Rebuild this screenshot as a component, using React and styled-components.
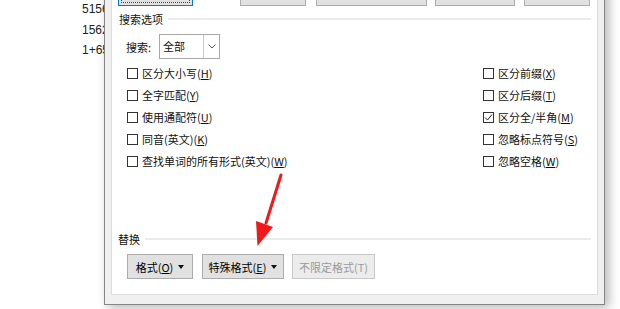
import React from 'react'
import styled, { createGlobalStyle } from 'styled-components'

const GlobalStyle = createGlobalStyle`
  html, body {
    margin: 0;
    padding: 0;
    background: #fff;
  }
  body {
    font-family: "Noto Sans CJK SC", "Noto Sans", sans-serif;
  }
`

const Page = styled.div`
  position: relative;
  display: flex;
  width: 620px;
  height: 309px;
  overflow: hidden;
  background: #fff;
`

const Sheet = styled.div`
  flex: none;
  width: 104px;
  box-sizing: border-box;
  padding-left: 82px;
  margin-top: -1px;
  overflow: hidden;
  white-space: nowrap;
  font-family: "Liberation Sans", Arial, sans-serif;
  font-size: 12px;
  line-height: 20.5px;
  color: #222;
`

const Dialog = styled.div`
  flex: none;
  align-self: flex-start;
  width: 501px;
  box-sizing: border-box;
  margin-top: -28px;
  padding: 6px 6px 9px;
  background: #f0f0f0;
  border: 1px solid #858585;
  box-shadow: 4px 3px 10px rgba(0, 0, 0, 0.28);
`

const Panel = styled.div`
  display: flex;
  flex-direction: column;
  padding-bottom: 15px;
  background: #fff;
  border: 1px solid #dcdcdc;
  font-size: 11px;
  color: #111;
`

const ButtonRow = styled.div`
  display: flex;
  margin-top: ${p => p.$mt}px;
  padding-left: ${p => p.$pl}px;
`

const Button = styled.button`
  display: flex;
  align-items: center;
  justify-content: center;
  gap: 5px;
  width: ${p => p.$w}px;
  height: ${p => p.$h || 25}px;
  margin-left: ${p => p.$gap || 0}px;
  padding: 0;
  box-sizing: border-box;
  background: ${p => (p.$disabled ? '#ececec' : '#e1e1e1')};
  border: 1px solid ${p => (p.$focused ? '#0078d7' : p.$disabled ? '#c8c8c8' : '#adadad')};
  color: ${p => (p.$disabled ? '#9b9b9b' : '#000')};
  font-family: "Noto Sans CJK SC", sans-serif;
  font-size: 11px;
  outline: ${p => (p.$focused ? '1px dotted #444' : 'none')};
  outline-offset: -4px;
`

const Caret = styled.span`
  width: 0;
  height: 0;
  border-left: 3.5px solid transparent;
  border-right: 3.5px solid transparent;
  border-top: 4px solid #111;
`

const SectionHeader = styled.div`
  display: flex;
  align-items: center;
  height: 14px;
  margin-top: ${p => p.$mt}px;
  padding: 0 6px 0 ${p => p.$pl}px;
  line-height: 14px;
  color: #111;
`

const Rule = styled.div`
  flex: 1;
  height: 2px;
  margin: -1px 0 0 5px;
  background: #ebebeb;
`

const SearchRow = styled.div`
  display: flex;
  align-items: center;
  height: 25px;
  margin-top: 8px;
  padding-left: 14px;
`

const Label = styled.span`
  width: 33px;
`

const Select = styled.div`
  display: flex;
  width: 61px;
  height: 25px;
  box-sizing: border-box;
  border: 1px solid #a9a9a9;
  background: #fff;
`

const SelectValue = styled.span`
  flex: 1;
  padding-left: 3px;
  line-height: 23px;
`

const SelectDrop = styled.span`
  display: flex;
  align-items: center;
  justify-content: center;
  width: 15px;
  border-left: 1px solid #c9c9c9;
`

const Options = styled.div`
  display: grid;
  grid-template-columns: 356px 1fr;
  grid-auto-rows: 22px;
  margin-top: 3px;
  padding-left: 15px;
`

const Option = styled.label`
  display: flex;
  align-items: center;
  gap: 4px;
  white-space: nowrap;
`

const Box = styled.span`
  display: flex;
  align-items: center;
  justify-content: center;
  width: 11px;
  height: 11px;
  box-sizing: border-box;
  border: 1px solid #333;
  background: #fff;
`

const Arrow = styled.svg`
  position: absolute;
  left: 0;
  top: 0;
  pointer-events: none;
`

const sheetLines = ['5156', '1562', '1+658']

const options = [
  ['区分大小写', 'H'], ['区分前缀', 'X'],
  ['全字匹配', 'Y'], ['区分后缀', 'T'],
  ['使用通配符', 'U'], ['区分全/半角', 'M', true],
  ['同音(英文)', 'K'], ['忽略标点符号', 'S'],
  ['查找单词的所有形式(英文)', 'W'], ['忽略空格', 'W'],
]

const topButtons = [
  { w: 75, gap: 0, focused: true },
  { w: 66, gap: 47 },
  { w: 111, gap: 10 },
  { w: 80, gap: 8 },
  { w: 66, gap: 9 },
]

function Key({ k }) {
  return <>(<u>{k}</u>)</>
}

export default function App() {
  return (
    <Page>
      <GlobalStyle />
      <Sheet>
        {sheetLines.map(l => <div key={l}>{l}</div>)}
      </Sheet>
      <Dialog>
        <Panel>
          <ButtonRow $mt={3} $pl={6}>
            {topButtons.map((b, i) => (
              <Button key={i} $w={b.w} $h={23} $gap={b.gap} $focused={b.focused} />
            ))}
          </ButtonRow>

          <SectionHeader $mt={6} $pl={7}>
            搜索选项
            <Rule />
          </SectionHeader>

          <SearchRow>
            <Label>搜索:</Label>
            <Select>
              <SelectValue>全部</SelectValue>
              <SelectDrop>
                <svg width="8" height="5" viewBox="0 0 8 5">
                  <polyline points="0.5,0.5 4,4 7.5,0.5" fill="none" stroke="#555" strokeWidth="1" />
                </svg>
              </SelectDrop>
            </Select>
          </SearchRow>

          <Options>
            {options.map(([text, k, checked], i) => (
              <Option key={i}>
                <Box>
                  {checked && (
                    <svg width="9" height="9" viewBox="0 0 9 9">
                      <polyline points="1,4.5 3.5,7 8,1.5" fill="none" stroke="#222" strokeWidth="1" />
                    </svg>
                  )}
                </Box>
                <span>{text}<Key k={k} /></span>
              </Option>
            ))}
          </Options>

          <SectionHeader $mt={60} $pl={6}>
            替换
            <Rule />
          </SectionHeader>

          <ButtonRow $mt={8} $pl={15}>
            <Button $w={66}>
              <span>格式<Key k="O" /></span>
              <Caret />
            </Button>
            <Button $w={82} $gap={9}>
              <span>特殊格式<Key k="E" /></span>
              <Caret />
            </Button>
            <Button $w={83} $gap={8} $disabled>
              不限定格式(T)
            </Button>
          </ButtonRow>
        </Panel>
      </Dialog>

      <Arrow width="620" height="309" viewBox="0 0 620 309">
        <line x1="281" y1="175" x2="266" y2="223" stroke="#f01818" strokeWidth="3" strokeLinecap="round" />
        <polygon points="257.5,246 256,221 273,227" fill="#f01818" />
      </Arrow>
    </Page>
  )
}
